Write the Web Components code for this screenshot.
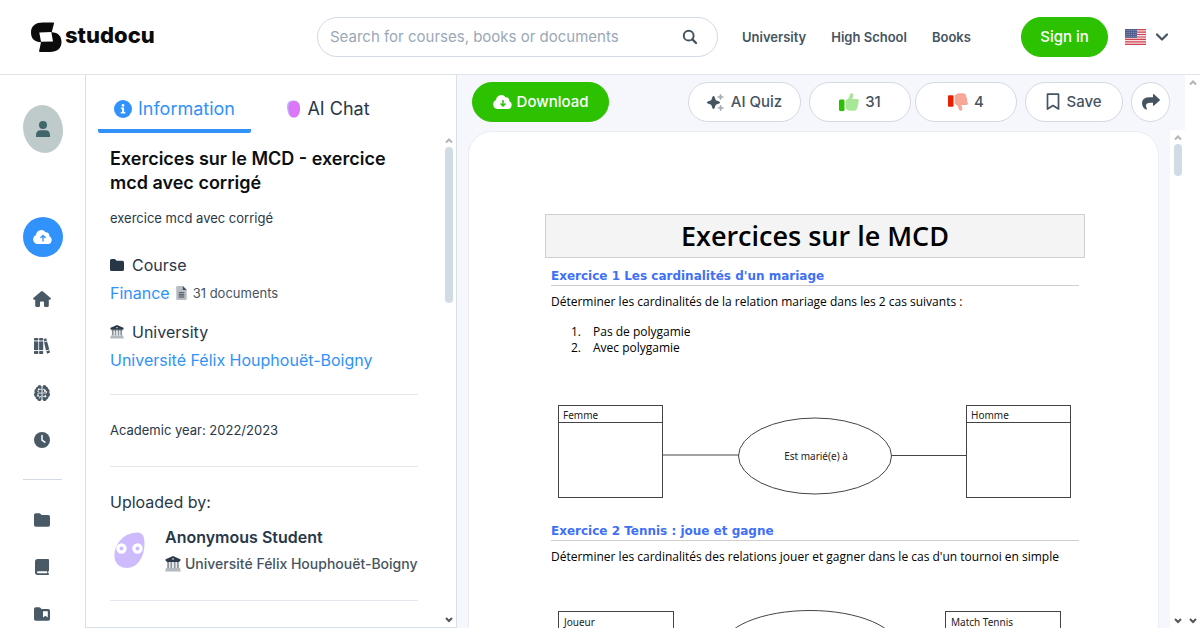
<!DOCTYPE html>
<html lang="en">
<head>
<meta charset="utf-8">
<title>Exercices sur le MCD - Studocu</title>
<style>
  html, body { margin: 0; height: 100%; }
  body { font-family: Inter, "Noto Sans", sans-serif; color: #283748; background: #fff; overflow: hidden; }
</style>
</head>
<body>
<study-app></study-app>

<script>
const define = (name, html) => {
  const template = document.createElement('template');
  template.innerHTML = html;
  customElements.define(name, class extends HTMLElement {
    constructor() {
      super();
      this.attachShadow({ mode: 'open' }).append(template.content.cloneNode(true));
    }
  });
};

/* Icon set: [viewBox, markup] */
const icons = {
  search: ['0 0 16 16', '<circle cx="6.7" cy="6.7" r="4.9" fill="none" stroke="currentColor" stroke-width="2"/><path d="M10.4 10.4 14 14" stroke="currentColor" stroke-width="2.4" stroke-linecap="round"/>'],
  chevron: ['0 0 14 14', '<path d="M2 4.5 7 9.5 12 4.5" fill="none" stroke="currentColor" stroke-width="2.2" stroke-linecap="round" stroke-linejoin="round"/>'],
  info: ['0 0 18 18', '<circle cx="9" cy="9" r="9" fill="currentColor"/><circle cx="9" cy="5.4" r="1.3" fill="#fff"/><path d="M6.9 7.6H10.1V12H11.3V13.5H6.8V12H8V9.1H6.9Z" fill="#fff"/>'],
  egg: ['0 0 16 18', '<path d="M8 .5C2 .5 1.500 5 2.400 10 3.300 15 5 17.300 8.500 17.300 13 17.300 15 13 15 8 15 3 12.500 .5 8 .5Z" fill="#b9b5f7"/><path d="M9.200 1C4.500 1 3.300 4.500 3.600 9 3.900 14 5.500 17.600 9 17.600 13 17.600 15 13 15 8.500 15 4 13 1 9.200 1Z" fill="#de76fb"/>'],
  folder: ['0 0 16 16', '<path d="M0 3Q0 1.200 1.800 1.200H5.200Q6 1.200 6.600 2L7.500 3H14.200Q16 3 16 4.800V13Q16 14.800 14.200 14.800H1.800Q0 14.800 0 13Z" fill="currentColor"/>'],
  saved: ['0 0 16 16', '<path d="M0 3Q0 1.200 1.800 1.200H5.200Q6 1.200 6.600 2L7.500 3H14.200Q16 3 16 4.800V13Q16 14.800 14.200 14.800H1.800Q0 14.800 0 13Z" fill="currentColor"/><path d="M9 5.200H13.800V11.500L11.400 9.700 9 11.500Z" fill="#fff"/>'],
  file: ['0 0 12 16', '<path d="M1.500 0H7.500L12 4.500V14.500Q12 16 10.500 16H1.500Q0 16 0 14.500V1.500Q0 0 1.500 0Z" fill="#b8bdc3"/><path d="M7.500 0 12 4.500H7.500ZM2.800 7H9.200V8.300H2.800ZM2.800 9.500H9.200V10.800H2.800ZM2.800 12H9.200V13.200H2.800Z" fill="#3c4b5a"/>'],
  landmark: ['0 0 16 16', '<path d="M8 0 15.300 3.200Q15.800 3.500 15.500 4.200L15.200 5H.8L.5 4.200Q.2 3.500 .7 3.200Z" fill="#2c3a49"/><circle cx="8" cy="3" r=".8" fill="#fff"/><path d="M2.200 5.500H4.200V12H2.200ZM5.400 5.500H7.200V12H5.400ZM8.800 5.500H10.600V12H8.800ZM11.800 5.500H13.800V12H11.800Z" fill="#8b939c"/><path d="M1.200 12H14.800L16 15.500H0Z" fill="#b4b9bf"/><path d="M1.500 5H14.500V6H1.500Z" fill="#2c3a49"/>'],
  cloudup: ['0 0 20 16', '<path d="M4.700 15A4.700 4.700 0 0 1 3 6 5.400 5.400 0 0 1 12.600 3.200 3.600 3.600 0 0 1 16.400 7.200 4.200 4.200 0 0 1 15.800 15Z" fill="#fff"/><path d="M10 12.500V7M7.500 9 10 6.500 12.500 9" fill="none" stroke="#3092fa" stroke-width="1.300"/>'],
  clouddown: ['0 0 20 16', '<path d="M4.700 15A4.700 4.700 0 0 1 3 6 5.400 5.400 0 0 1 12.600 3.200 3.600 3.600 0 0 1 16.400 7.200 4.200 4.200 0 0 1 15.800 15Z" fill="#fff"/><path d="M10 6V11.500M7.500 9.500 10 12 12.500 9.500" fill="none" stroke="#2dc201" stroke-width="1.500"/>'],
  home: ['0 0 18 16', '<path d="M9 0Q9.500 0 10 .4L17.600 7Q18.100 7.500 17.800 8.100 17.500 8.700 16.900 8.700H15.800V14.500Q15.800 16 14.300 16H12.300Q11 16 11 14.700V11.500Q11 10.600 10.200 10.600H7.800Q7 10.600 7 11.500V14.700Q7 16 5.700 16H3.700Q2.200 16 2.200 14.500V8.700H1.100Q.5 8.700 .2 8.100-.1 7.500 .4 7L8 .4Q8.500 0 9 0Z" fill="currentColor"/>'],
  books: ['0 0 16 16', '<g fill="currentColor"><rect width="4.300" height="2.500" rx=".7"/><rect y="3.400" width="4.300" height="8.700"/><rect y="13" width="4.300" height="3" rx=".7"/><rect x="5.100" width="4.100" height="2.500" rx=".7"/><rect x="5.100" y="3.400" width="4.100" height="8.700"/><rect x="5.100" y="13" width="4.100" height="3" rx=".7"/><path d="M9.900 1 12.200.3 12.900 2.700 9.900 3.500ZM10.100 4.300 13.100 3.500 15.300 11.500 12 12.400ZM12.300 13.200 15.500 12.300 16 14.600 13.100 15.800Z"/></g>'],
  brain: ['0 0 16 16', '<path d="M7.500 1.500V14.500Q7 16 5.400 16 3.800 16 3.300 14.400 1.500 14 1.500 12 0 11.300 0 9.500 0 8.500 .8 7.500-.3 5 1.700 3.900 1.700 2 3.500 1.700 4 0 5.600 0 7.200 0 7.500 1.500ZM8.500 1.500V14.500Q9 16 10.600 16 12.200 16 12.700 14.400 14.500 14 14.500 12 16 11.300 16 9.500 16 8.500 15.200 7.500 16.300 5 14.300 3.900 14.300 2 12.500 1.700 12 0 10.400 0 8.800 0 8.500 1.500Z" fill="currentColor"/><path d="M7.500 4.300H5M7.500 8H4V10.500M7 11.500H5.700V13.500M3 6.200H5.200M8.500 4.600H11V6.600M8.500 8H12.500V6M8.500 11.400H11.300V9.800" fill="none" stroke="#fff" stroke-width=".8"/><g fill="#fff"><circle cx="4.700" cy="4.300" r=".9"/><circle cx="4" cy="10.800" r=".9"/><circle cx="11" cy="6" r=".9"/><circle cx="11.500" cy="11.400" r=".9"/></g>'],
  clock: ['0 0 16 16', '<circle cx="8" cy="8" r="8" fill="currentColor"/><path d="M8 3.500V8.200L10.800 10.200" fill="none" stroke="#fff" stroke-width="1.500" stroke-linecap="round"/>'],
  book: ['0 0 16 16', '<path d="M3.700 0H14Q15 0 15 1V11.200Q15 12 14.300 12.200V14.300Q15 14.400 15 15.200T14.200 16H3.700Q1 16 1 13.300V2.700Q1 0 3.700 0Z" fill="currentColor"/><path d="M4 12.300H13.200V14.200H4Q3 14.200 3 13.250 3 12.300 4 12.300Z" fill="#fff"/>'],
  user: ['0 0 14 16', '<circle cx="7" cy="4" r="4" fill="currentColor"/><path d="M0 16V14Q0 9.300 4.700 9.300H9.300Q14 9.300 14 14V16Z" fill="currentColor"/>'],
  sparkle: ['0 0 18 18', '<path d="M6.500 3Q7.200 3 7.500 3.800L8.800 7.200 12.200 8.500Q13 8.800 13 9.500T12.200 10.500L8.800 11.800 7.500 15.200Q7.200 16 6.500 16T5.500 15.200L4.200 11.800 .8 10.500Q0 10.200 0 9.500T.8 8.500L4.200 7.200 5.500 3.800Q5.800 3 6.500 3Z" fill="currentColor"/><path d="M13.500 1 14.300 3.200 16.500 4 14.300 4.800 13.500 7 12.700 4.800 10.500 4 12.700 3.200ZM13.700 12 14.500 14.200 16.700 15 14.500 15.800 13.700 18 12.900 15.800 10.700 15 12.900 14.200Z" fill="#a3abb3" stroke="#a3abb3" stroke-width=".6"/>'],
  up: ['0 0 20 18', '<rect y="6.500" width="5.500" height="11.500" rx="1.200" fill="#2dc201"/><path d="M6.700 7.600 9.700 5 11 1.500Q11.600-.2 13 .3 15 1 14 4L13.200 6H18Q20 6 20 7.600 20 8.700 19 9.200 20 10.700 18.700 12 19.400 13.500 18 14.500 18.500 17.700 15.500 17.800H11.500Q9.500 17.800 8.300 16.700L6.700 15.600Z" fill="#a9e798"/>'],
  down: ['0 0 20 18', '<rect y="2.300" width="5.500" height="11.500" rx="1" fill="#e82000"/><path d="M6.700 2.400 8.300 1.300Q9.500.2 11.500.2H15.500Q18.500.3 18 3.500 19.400 4.500 18.700 6 20 7.300 19 8.800 20 9.300 20 10.400 20 12 18 12H13.200L14 14Q15 17 13 17.700 11.600 18.200 11 16.500L9.700 13 6.700 10.400Z" fill="#f8a797"/>'],
  bookmark: ['0 0 14 18', '<path d="M1.500 1.200H12.500V16L7 12.500 1.500 16Z" fill="none" stroke="currentColor" stroke-width="1.700" stroke-linejoin="round"/>'],
  share: ['0 0 18 16', '<path d="M11 .8Q11-.3 12 .3L17.500 5.300Q18.200 6 17.500 6.700L12 11.600Q11 12.300 11 11.200V8.700H8.500Q4 8.700 4 11.500 4 13 4.700 14 5.200 15.500 4.200 15.700 0 13.500 0 9 0 3.300 8 3.300H11Z" fill="currentColor"/>'],
  flag: ['0 0 21 16', '<path d="M0 0H21V16H0Z" fill="#f5dfe2"/><path d="M0 .6H21M0 3.100H21M0 5.500H21M0 8H21M0 10.400H21M0 12.900H21M0 15.400H21" stroke="#cf4352" stroke-width="1.200"/><path d="M0 0H12V8.800H0Z" fill="#505f8e"/><path d="M.8 1.500H12M.8 3.500H12M.8 5.500H12M.8 7.500H12" stroke="#aab3cc" stroke-width=".7" stroke-dasharray=".8 1"/>'],
  logo: ['0 0 31 31', '<path fill-rule="evenodd" d="M22.300 .5Q23.200 .5 23 1.400L20.700 10.200C27 10.300 30.500 14 30.500 20 30.500 26.500 26 30 19 30H9Q7.900 30 8.100 29L10 20.300C4 20 0 17 0 10.500 0 3.500 5 .5 12 .5ZM8.300 10.500 10 19.700 22 19.500 20.300 10Z" fill="#0b0b0b"/>'],
  student: ['0 0 30 36', '<path d="M23 .5Q30 0 30 11 30 22 25 29 20 36 12.500 36 4 36 .8 29-2 20 4 10.500 10 1 23 .5Z" fill="#cdbbfd"/><g fill="#cdbbfd" stroke="#fff" stroke-width="3.200"><circle cx="7" cy="16.500" r="3.600"/><circle cx="23" cy="16.500" r="3.600"/></g>']
};

customElements.define('ui-icon', class extends HTMLElement {
  constructor() { super(); this.attachShadow({ mode: 'open' }); }
  connectedCallback() {
    const [box, markup] = icons[this.getAttribute('name')];
    const w = this.getAttribute('w') || 16;
    const h = this.getAttribute('h') || w;
    this.shadowRoot.innerHTML = `<style>:host{display:inline-flex;flex:none}svg{display:block}</style>
      <svg width="${w}" height="${h}" viewBox="${box}" aria-hidden="true">${markup}</svg>`;
  }
});

/* Rounded button; the look is picked with the kind attribute */
define('pill-button', `
<style>
  :host { display: block; flex: none; }
  button { width: 100%; height: 40px; box-sizing: border-box; display: flex; align-items: center; justify-content: center; gap: 6px;
    border: 1px solid #d3dae3; border-radius: 20px; background: #fff; color: #46545f; font: 500 15px/20px Inter, sans-serif; padding: 0; cursor: pointer; white-space: nowrap; }
  :host([kind=primary]) button { gap: 4px; background: #2dc201; border-color: #2dc201; color: #fff; }
</style>
<button type="button"><slot></slot></button>`);

define('site-header', `
<style>
  :host { display: grid; grid-template-columns: minmax(150px, 286px) minmax(160px, 401px) 1fr auto; align-items: center; height: 74px; padding: 0 31px; border-bottom: 1px solid #e0e4ea; }
  .logo { display: flex; align-items: center; gap: 3px; color: #0b0b0b; text-decoration: none; font: 800 22px/30px Inter, sans-serif; }
  .logo span { padding-bottom: 4px; }
  form { display: flex; align-items: center; height: 40px; box-sizing: border-box; border: 1px solid #d3dae3; border-radius: 20px; padding: 0 19px 0 12px; color: #46545f; }
  input { flex: 1; min-width: 0; border: 0; outline: 0; padding: 0; background: none; font: 400 15px/24px Inter, sans-serif; color: #283748; }
  input::placeholder { color: #9aa8b7; opacity: 1; }
  nav { display: flex; gap: 25px; padding-left: 24px; }
  nav a { color: #46545f; text-decoration: none; font: 600 13px/20px Inter, sans-serif; white-space: nowrap; }
  .end { display: flex; align-items: center; }
  pill-button { width: 87px; }
  .lang { display: flex; align-items: center; gap: 9px; border: 0; background: none; padding: 0; margin-left: 17px; color: #46545f; }
</style>
<a class="logo" href="#"><ui-icon name="logo" w="31"></ui-icon><span>studocu</span></a>
<form role="search"><input type="search" aria-label="Search" placeholder="Search for courses, books or documents"><ui-icon name="search" w="16"></ui-icon></form>
<nav><a href="#">University</a><a href="#">High School</a><a href="#">Books</a></nav>
<div class="end">
  <pill-button kind="primary">Sign in</pill-button>
  <button class="lang" aria-label="Language"><ui-icon name="flag" w="21" h="16"></ui-icon><ui-icon name="chevron" w="14"></ui-icon></button>
</div>`);

define('side-rail', `
<style>
  :host { display: flex; flex-direction: column; box-sizing: border-box; padding: 30px 23px 0; border-right: 1px solid #d8e0e8; color: #4a5966; overflow: hidden; }
  a { display: flex; align-items: center; justify-content: center; color: inherit; flex: none; }
  .user { height: 48px; width: 40px; background: #bfcbca; color: #42676a; border-radius: 48% 52% 44% 56% / 46% 54% 46% 54%; }
  .upload { width: 40px; height: 40px; border-radius: 50%; background: #3092fa; margin: 64px 0 18px; }
  nav a { height: 47px; width: 38px; }
  hr { width: 100%; height: 1px; box-sizing: border-box; border: 0; background: #d3dae3; margin: 16px 0; flex: none; }
</style>
<a class="user" href="#" aria-label="Profile"><ui-icon name="user" w="14" h="16"></ui-icon></a>
<a class="upload" href="#" aria-label="Upload"><ui-icon name="cloudup" w="20" h="16"></ui-icon></a>
<nav>
  <a href="#" aria-label="Home"><ui-icon name="home" w="18" h="16"></ui-icon></a>
  <a href="#" aria-label="Library"><ui-icon name="books"></ui-icon></a>
  <a href="#" aria-label="Quizzes"><ui-icon name="brain"></ui-icon></a>
  <a href="#" aria-label="Recent"><ui-icon name="clock"></ui-icon></a>
</nav>
<hr>
<nav>
  <a href="#" aria-label="Courses"><ui-icon name="folder"></ui-icon></a>
  <a href="#" aria-label="Books"><ui-icon name="book"></ui-icon></a>
  <a href="#" aria-label="Studylists"><ui-icon name="saved"></ui-icon></a>
</nav>`);

define('scroll-track', `
<style>
  :host { display: flex; flex-direction: column; align-items: center; box-sizing: border-box; width: 15px; background: #fff; padding: 2px 0; }
  .thumb { width: 8px; height: var(--thumb, 0px); background: #d0dbe3; border-radius: 4px; }
  svg { flex: none; display: block; }
  .low { margin-top: auto; }
</style>
<svg width="8" height="12"><path d="M1 7.500 4 4.500 7 7.500" fill="none" stroke="#b5b5b5" stroke-width="2"/></svg>
<div class="thumb"></div>
<svg class="low" width="8" height="10"><path d="M1 3 4 6 7 3" fill="none" stroke="#555" stroke-width="2"/></svg>`);

define('info-panel', `
<style>
  :host { display: flex; flex-direction: column; box-sizing: border-box; border: solid #d8e0e8; border-width: 0 1px 1px 0; min-height: 0; overflow: hidden; }
  .tabs { display: flex; padding: 10px 12px 0; height: 48px; flex: none; }
  .tabs button { flex: 0 1 153px; display: flex; align-items: center; justify-content: center; gap: 6px; height: 48px; box-sizing: border-box; padding: 4px 0 0; border: 0; border-bottom: 4px solid transparent; border-radius: 2px; background: none; font: 400 18px/24px Inter, sans-serif; color: #283748; }
  .tabs button[aria-selected=true] { color: #3092fa; border-color: #3092fa; }
  .scroll { display: flex; flex: 1; min-height: 0; }
  .body { flex: 1; min-width: 0; padding: 14px 23px 0 24px; overflow: hidden; white-space: nowrap; }
  scroll-track { --thumb: 156px; }
  h1 { margin: 0 0 13px; font: 600 18px/24px Inter, sans-serif; color: #0c0f12; white-space: normal; max-width: 290px; }
  p { margin: 0; font: 400 13px/20px Inter, sans-serif; }
  h2 { display: flex; align-items: center; gap: 8px; margin: 0 0 4px; font: 400 16px/24px Inter, sans-serif; }
  a { color: #3092fa; text-decoration: none; font: 400 16px/24px Inter, sans-serif; }
  .row { display: flex; align-items: center; gap: 6px; margin-bottom: 15px; color: #46545f; }
  .last { margin-bottom: 22px; }
  hr { height: 1px; border: 0; margin: 26px 0; background: #e3e8ee; }
  hr.first { margin: 0 0 25px; }
  hr.second { margin-bottom: 23px; }
  .intro { margin-bottom: 25px; }
  .uploaded { margin-bottom: 11px; }
  .by { display: flex; align-items: center; gap: 20px; padding-left: 4px; }
  .by strong { display: block; font: 600 16px/24px Inter, sans-serif; margin-bottom: 5px; }
  .by span { display: flex; align-items: center; gap: 4px; font: 500 14px/20px Inter, sans-serif; color: #46545f; }
</style>
<div class="tabs" role="tablist">
  <button role="tab" aria-selected="true"><ui-icon name="info" w="18"></ui-icon>Information</button>
  <button role="tab" aria-selected="false"><ui-icon name="egg" w="16" h="18"></ui-icon>AI Chat</button>
</div>
<div class="scroll">
  <div class="body">
    <h1>Exercices sur le MCD - exercice mcd avec corrigé</h1>
    <p class="intro">exercice mcd avec corrigé</p>
    <h2><ui-icon name="folder" w="14"></ui-icon>Course</h2>
    <div class="row"><a href="#">Finance</a><ui-icon name="file" w="11" h="14"></ui-icon><p>31 documents</p></div>
    <h2><ui-icon name="landmark" w="14"></ui-icon>University</h2>
    <div class="row last"><a href="#">Université Félix Houphouët-Boigny</a></div>
    <hr class="first">
    <p>Academic year: 2022/2023</p>
    <hr class="second">
    <h2 class="uploaded">Uploaded by:</h2>
    <div class="by"><ui-icon name="student" w="31" h="36"></ui-icon><div><strong>Anonymous Student</strong><span><ui-icon name="landmark" w="16"></ui-icon>Université Félix Houphouët-Boigny</span></div></div>
    <hr>
  </div>
  <scroll-track></scroll-track>
</div>`);

define('doc-toolbar', `
<style>
  :host { display: flex; gap: 8px; padding: 7px 15px 8px 15px; background: #f6f7fc; }
  .download { width: 137px; margin-right: auto; }
  .votes { display: flex; gap: 4px; }
  .quiz { width: 113px; } .vote { width: 102px; } .save { width: 98px; } .share { width: 39px; }
</style>
<pill-button class="download" kind="primary"><ui-icon name="clouddown" w="20" h="16"></ui-icon>Download</pill-button>
<pill-button class="quiz"><ui-icon name="sparkle" w="18"></ui-icon>AI Quiz</pill-button>
<div class="votes">
  <pill-button class="vote"><ui-icon name="up" w="20" h="18"></ui-icon>31</pill-button>
  <pill-button class="vote"><ui-icon name="down" w="20" h="18"></ui-icon>4</pill-button>
</div>
<pill-button class="save"><ui-icon name="bookmark" w="14" h="18"></ui-icon>Save</pill-button>
<pill-button class="share"><ui-icon name="share" w="18" h="16"></ui-icon></pill-button>`);

define('doc-page', `
<style>
  :host { display: block; box-sizing: border-box; background: #fff; border: 1px solid #ebedf4; border-radius: 24px; padding: 82px 73px 0 76px; color: #000; min-height: 1000px; font-family: "Open Sans", "Noto Sans", sans-serif; }
  h1 { margin: 0 0 9px; height: 44px; box-sizing: border-box; border: 1px solid #cfcfcf; background: #f4f4f4; text-align: center; font: 600 27px/42px "Open Sans", sans-serif; }
  section { padding: 0 6px; }
  h2 { margin: 0 0 8px; border-bottom: 1px solid #cfcfcf; font: 700 12px/18px "DejaVu Sans", sans-serif; color: #4070f5; }
  p, li { font-size: 12px; line-height: 16px; }
  p { margin: 0; }
  ol { margin: 14px 0 49px; padding-left: 42px; }
  li::marker { content: counter(list-item) ".\\2003"; }
  svg { display: block; width: 100%; height: auto; overflow: visible; fill: none; stroke: #444; stroke-width: 1; }
  text { fill: #222; stroke: none; font: 10px "Noto Sans", sans-serif; }
  .d1 { margin-bottom: 23px; }
  .d2 { margin-top: 46px; }
</style>
<h1>Exercices sur le MCD</h1>
<section>
  <h2>Exercice 1 Les cardinalités d'un mariage</h2>
  <p>Déterminer les cardinalités de la relation mariage dans les 2 cas suivants :</p>
  <ol><li>Pas de polygamie</li><li>Avec polygamie</li></ol>
  <svg class="d1" viewBox="0 0 528 94">
    <rect x="7.5" y=".5" width="104" height="92"/><path d="M7.500 17.500H111.500"/>
    <rect x="415.5" y=".5" width="104" height="92"/><path d="M415.500 17.500H519.500"/>
    <ellipse cx="264" cy="51" rx="76.5" ry="38"/><path d="M111.500 50H187.500M340.500 50.500H415.500"/>
    <text x="12" y="14">Femme</text><text x="420" y="14">Homme</text><text x="265" y="55" text-anchor="middle">Est marié(e) à</text>
  </svg>
</section>
<section>
  <h2>Exercice 2 Tennis : joue et gagne</h2>
  <p>Déterminer les cardinalités des relations jouer et gagner dans le cas d'un tournoi en simple</p>
  <svg class="d2" viewBox="0 0 528 94">
    <rect x="7.5" y=".5" width="115" height="92"/><path d="M7.500 18.500H122.500"/>
    <rect x="394.5" y=".5" width="115" height="92"/><path d="M394.500 18.500H509.500"/>
    <ellipse cx="259" cy="37" rx="88" ry="37.500"/>
    <text x="13" y="15">Joueur</text><text x="400" y="15">Match Tennis</text>
  </svg>
</section>`);

define('doc-viewer', `
<style>
  :host { display: grid; grid-template-columns: 1fr 15px; min-width: 0; min-height: 0; overflow: hidden; }
  .main { display: flex; flex-direction: column; min-width: 0; min-height: 0; background: #f6f7fc; }
  .view { display: flex; flex: 1; min-height: 0; }
  .sheet { flex: 1; min-width: 0; padding: 1px 11px 0; overflow: hidden; }
  .view scroll-track { --thumb: 32px; }
</style>
<div class="main">
  <doc-toolbar></doc-toolbar>
  <div class="view"><div class="sheet"><doc-page></doc-page></div><scroll-track></scroll-track></div>
</div>
<scroll-track></scroll-track>`);

define('study-app', `
<style>
  :host { display: flex; flex-direction: column; height: 100vh; }
  main { flex: 1; min-height: 0; display: grid; grid-template-columns: 86px 371px minmax(0, 1fr); grid-template-rows: minmax(0, 1fr); }
</style>
<site-header></site-header>
<main><side-rail></side-rail><info-panel></info-panel><doc-viewer></doc-viewer></main>`);
</script>
</body>
</html>
